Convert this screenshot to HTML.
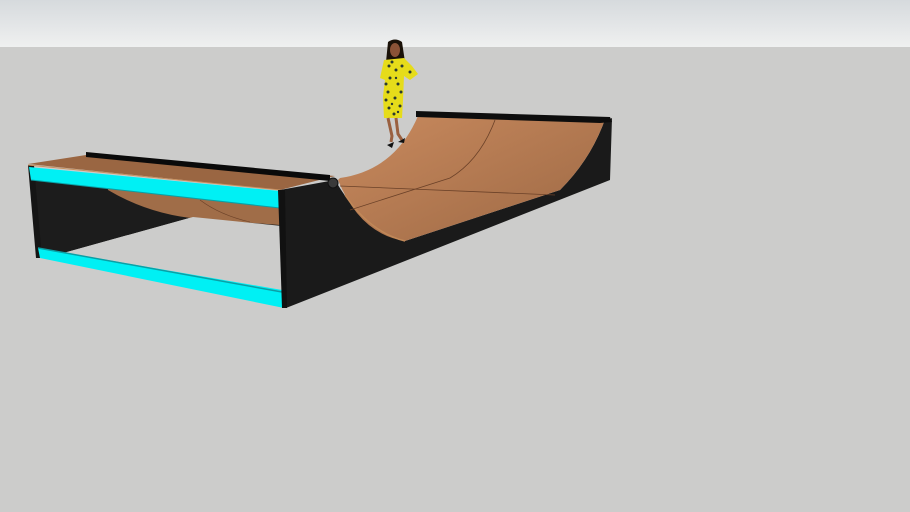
<!DOCTYPE html>
<html><head><meta charset="utf-8"><style>
html,body{margin:0;padding:0;width:910px;height:512px;overflow:hidden;background:#cccccb;}
svg{display:block}
</style></head><body>
<svg width="910" height="512" viewBox="0 0 910 512" xmlns="http://www.w3.org/2000/svg">
<defs>
<linearGradient id="sky" x1="0" y1="0" x2="0" y2="1">
<stop offset="0" stop-color="#d6dadd"/><stop offset="1" stop-color="#eff0f0"/>
</linearGradient>
<linearGradient id="wood" x1="0" y1="0" x2="1" y2="1">
<stop offset="0" stop-color="#c98a5e"/><stop offset="1" stop-color="#9c6844"/>
</linearGradient>
</defs>
<rect x="0" y="0" width="910" height="47" fill="url(#sky)"/>
<rect x="0" y="47" width="910" height="465" fill="#cccccb"/>

<!-- left box inner black back -->
<polygon points="30,170 282,195 282,232 193,217 67,252 40,258" fill="#1c1c1c"/>
<!-- inner curved ramp visible through box -->
<path d="M108,190 Q150,215 200,219 L280,225 L280,208 L108,188 Z" fill="#a06d48"/>
<path d="M200,200 Q220,215 250,222" stroke="#6b4128" stroke-width="0.6" fill="none"/>
<!-- gray opening -->
<polygon points="67,252 193,217 282,226 282,290" fill="#cccccb"/>
<!-- left post -->
<polygon points="28,165 34,165 42,258 36,258" fill="#151515"/>
<!-- right side big black panel -->
<path d="M280,190 L335,180 Q365,232 405,241 L560,190 Q590,160 604,122 L612,118 L610,180 L286,308 Z" fill="#1a1a1a"/>
<!-- ramp wood -->
<path d="M338,180 Q360,234 405,241 L560,190 Q590,160 604,122 L600,118 L418,116 Q395,170 340,178 Z" fill="url(#wood)"/>
<path d="M405,241 Q370,232 345,195" stroke="#c08858" stroke-width="1.5" fill="none"/>
<path d="M340,186 L555,195" stroke="#6b4128" stroke-width="0.8" fill="none"/>
<path d="M350,210 L450,178 Q480,160 495,120" stroke="#6b4128" stroke-width="0.8" fill="none"/>
<!-- right coping -->
<polygon points="416,111 610,117 612,122 600,123 416,117" fill="#0d0d0d"/>
<!-- left deck top -->
<polygon points="28,164 86,155 335,176 280,190" fill="#9a6642"/>
<line x1="28" y1="165" x2="280" y2="190" stroke="#c8905e" stroke-width="1"/>
<!-- left coping -->
<polygon points="86,152 330,175 330,181 86,157" fill="#0a0a0a"/>
<circle cx="333" cy="183" r="5" fill="#3a3a3a" stroke="#111" stroke-width="1"/>
<!-- cyan top strip -->
<polygon points="29,167 280,191 280,208 31,180" fill="#00f0f4"/>
<line x1="31" y1="180" x2="280" y2="208" stroke="#0a9fa5" stroke-width="1"/>
<!-- cyan bottom strip -->
<polygon points="38,248 282,290 284,308 40,258" fill="#00f0f4"/>
<line x1="38" y1="248" x2="282" y2="292" stroke="#0a9fa5" stroke-width="1.5"/>
<!-- front right edge of left box -->
<polygon points="278,190 285,190 287,308 282,308" fill="#111"/>

<!-- woman -->
<path d="M388,42 Q395,37 402,42 L405,62 L386,62 Z" fill="#1a1108"/>
<ellipse cx="395" cy="50" rx="5" ry="7" fill="#8a5236"/>
<path d="M384,60 L404,58 L412,66 L418,74 L410,80 L404,76 L403,100 L402,118 L384,118 L383,96 L385,80 L380,78 Z" fill="#e6dc1a"/>
<g fill="#2a3a30">
<circle cx="389" cy="66" r="1.5"/><circle cx="396" cy="70" r="1.5"/><circle cx="402" cy="66" r="1.5"/>
<circle cx="390" cy="78" r="1.5"/><circle cx="398" cy="84" r="1.5"/><circle cx="388" cy="92" r="1.5"/>
<circle cx="395" cy="98" r="1.5"/><circle cx="400" cy="106" r="1.5"/><circle cx="389" cy="108" r="1.5"/>
<circle cx="410" cy="72" r="1.5"/><circle cx="394" cy="114" r="1.5"/><circle cx="386" cy="84" r="1.5"/>
<circle cx="401" cy="92" r="1.5"/><circle cx="392" cy="62" r="1.5"/><circle cx="386" cy="100" r="1.5"/>
<circle cx="396" cy="78" r="1.2"/><circle cx="392" cy="104" r="1.2"/><circle cx="398" cy="112" r="1.2"/>
</g>
<path d="M388,118 L392,136 L391,142 M396,118 L398,134 L402,140" stroke="#9a6040" stroke-width="3" fill="none"/>
<path d="M387,145 L394,142 L392,148 Z M398,142 L405,138 L404,143 Z" fill="#111"/>
</svg>
</body></html>
